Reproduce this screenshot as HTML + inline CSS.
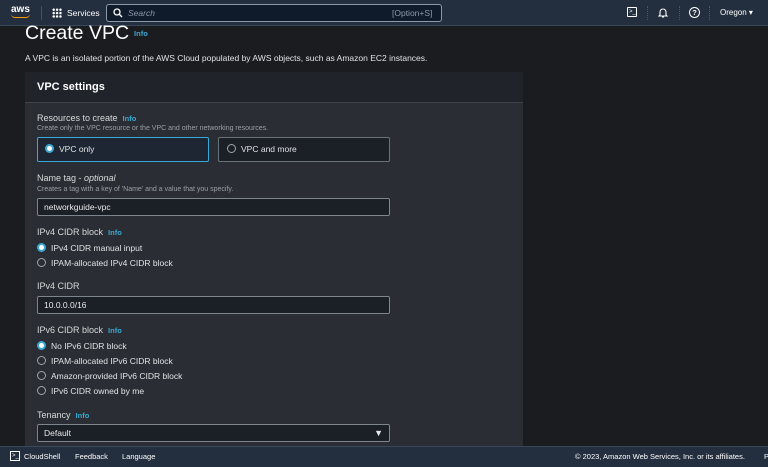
<!DOCTYPE html>
<html><head><style>
*{box-sizing:border-box;margin:0;padding:0}
body{width:768px;height:467px;background:#1a1c20;font-family:"Liberation Sans",sans-serif;color:#d5dbdb;position:relative;overflow:hidden;font-size:9px}
.a{position:absolute;white-space:nowrap}
.info{color:#39a8d4;font-weight:bold;font-size:7.5px;margin-left:5px}
.lbl{font-size:9px;color:#d5dbdb}
.desc{font-size:7px;color:#99a0a6}
.inp{position:absolute;left:37px;width:353px;height:18px;background:#1b1f26;border:1px solid #7d868c;border-radius:2px;padding:3px 6px;font-size:8.5px;color:#e8eaeb}
.r{position:absolute;left:37px;font-size:8.5px;color:#e0e3e5}
.r i{display:inline-block;width:9px;height:9px;border-radius:50%;border:1px solid #a0a6ab;vertical-align:-1px;margin-right:5px}
.r i.on{border:2.5px solid #39a8d4;background:#fff}
</style></head><body>
<div class="a" style="left:0;top:0;width:768px;height:26px;background:#232f3e;border-bottom:1px solid #3b4857"></div>
<div class="a" style="left:11px;top:4px;color:#fff;font-size:10px;font-weight:bold">aws</div>
<div class="a" style="left:11px;top:14px;width:19px;height:4px;border-bottom:1.5px solid #f90;border-radius:0 0 10px 10px"></div>
<div class="a" style="left:41px;top:6px;width:1px;height:14px;background:#44505e"></div>
<div class="a" style="left:52px;top:8px;width:10px;height:10px;background:radial-gradient(circle,#fff 1.1px,transparent 1.3px) 0 0/3.4px 3.4px"></div>
<div class="a" style="left:67px;top:8px;color:#fff;font-size:8.5px">Services</div>
<div class="a" style="left:106px;top:4px;width:336px;height:18px;background:#0f1b2a;border:1px solid #8d99a8;border-radius:3px"></div>
<svg class="a" style="left:113px;top:8px" width="10" height="10" viewBox="0 0 10 10"><circle cx="4" cy="4" r="3" fill="none" stroke="#fff" stroke-width="1.3"/><path d="M6.3 6.3L9 9" stroke="#fff" stroke-width="1.4"/></svg>
<div class="a" style="left:128px;top:8px;color:#8d99a8;font-size:8.5px;font-style:italic">Search</div>
<div class="a" style="left:392px;top:8px;color:#8d99a8;font-size:8.5px">[Option+S]</div>
<div class="a" style="left:627px;top:7px;width:10px;height:10px;border:1px solid #fff;border-radius:1px;font-size:6px;color:#fff;line-height:8px;padding-left:1px">&gt;_</div>
<div class="a" style="left:647px;top:6px;width:1px;height:14px;border-left:1px dotted #4a5766"></div>
<svg class="a" style="left:658px;top:7px" width="10" height="11" viewBox="0 0 10 11"><path d="M2 8V5a3 3 0 0 1 6 0v3l1 1H1z" fill="none" stroke="#fff" stroke-width="1.1"/><path d="M4 10h2" stroke="#fff"/></svg>
<div class="a" style="left:679px;top:6px;width:1px;height:14px;border-left:1px dotted #4a5766"></div>
<div class="a" style="left:689px;top:7px;width:11px;height:11px;border:1.3px solid #fff;border-radius:50%;font-size:7.5px;color:#fff;text-align:center;line-height:9px;font-weight:bold">?</div>
<div class="a" style="left:709px;top:6px;width:1px;height:14px;border-left:1px dotted #4a5766"></div>
<div class="a" style="left:720px;top:8px;color:#fff;font-size:8px">Oregon &#9662;</div>

<div class="a" style="left:25px;top:22px;font-size:19.5px;color:#fff">Create VPC<span class="info" style="font-size:7.5px;vertical-align:3px">Info</span></div>
<div class="a" style="left:25px;top:53px;font-size:8.5px;color:#e0e3e5">A VPC is an isolated portion of the AWS Cloud populated by AWS objects, such as Amazon EC2 instances.</div>

<div class="a" style="left:25px;top:72px;width:498px;height:31px;background:#202329;border-bottom:1px solid #3e434a"></div>
<div class="a" style="left:37px;top:81px;font-size:11px;font-weight:bold;color:#fff">VPC settings</div>
<div class="a" style="left:25px;top:103px;width:498px;height:343px;background:#2a2d33"></div>

<div class="a lbl" style="left:37px;top:113px">Resources to create<span class="info">Info</span></div>
<div class="a desc" style="left:37px;top:125px">Create only the VPC resource or the VPC and other networking resources.</div>
<div class="a" style="left:37px;top:137px;width:172px;height:25px;background:#1d2632;border:1px solid #39a8d4;border-radius:2px"></div>
<div class="r" style="left:45px;top:144px"><i class="on"></i>VPC only</div>
<div class="a" style="left:218px;top:137px;width:172px;height:25px;background:#1b1f26;border:1px solid #6b737a;border-radius:2px"></div>
<div class="r" style="left:227px;top:144px"><i></i>VPC and more</div>

<div class="a lbl" style="left:37px;top:173px">Name tag - <i>optional</i></div>
<div class="a desc" style="left:37px;top:186px">Creates a tag with a key of 'Name' and a value that you specify.</div>
<div class="inp" style="top:198px">networkguide-vpc</div>

<div class="a lbl" style="left:37px;top:227px">IPv4 CIDR block<span class="info">Info</span></div>
<div class="r" style="top:243px"><i class="on"></i>IPv4 CIDR manual input</div>
<div class="r" style="top:258px"><i></i>IPAM-allocated IPv4 CIDR block</div>

<div class="a lbl" style="left:37px;top:281px">IPv4 CIDR</div>
<div class="inp" style="top:296px">10.0.0.0/16</div>

<div class="a lbl" style="left:37px;top:325px">IPv6 CIDR block<span class="info">Info</span></div>
<div class="r" style="top:341px"><i class="on"></i>No IPv6 CIDR block</div>
<div class="r" style="top:356px"><i></i>IPAM-allocated IPv6 CIDR block</div>
<div class="r" style="top:371px"><i></i>Amazon-provided IPv6 CIDR block</div>
<div class="r" style="top:386px"><i></i>IPv6 CIDR owned by me</div>

<div class="a lbl" style="left:37px;top:410px">Tenancy<span class="info">Info</span></div>
<div class="inp" style="top:424px">Default<span style="position:absolute;right:6px;top:3px;font-size:9px">&#9660;</span></div>

<div class="a" style="left:0;top:446px;width:768px;height:21px;background:#232f3e;border-top:1px solid #3b4857"></div>
<div class="a" style="left:10px;top:451px;width:10px;height:10px;border:1px solid #fff;font-size:6px;line-height:8px;color:#fff;padding-left:1px">&gt;_</div>
<div class="a" style="left:24px;top:452px;font-size:7.5px;color:#fff">CloudShell</div>
<div class="a" style="left:75px;top:452px;font-size:7.5px;color:#fff">Feedback</div>
<div class="a" style="left:122px;top:452px;font-size:7.5px;color:#fff">Language</div>
<div class="a" style="left:575px;top:452px;font-size:7.5px;color:#fff">© 2023, Amazon Web Services, Inc. or its affiliates.</div>
<div class="a" style="left:764px;top:452px;font-size:7.5px;color:#fff">P</div>
</body></html>
